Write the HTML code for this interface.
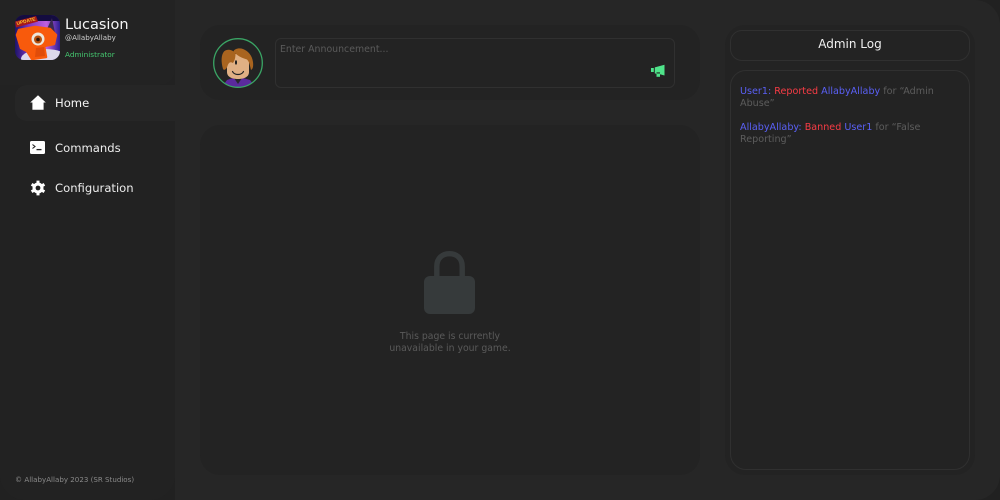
<!DOCTYPE html>
<html><head><meta charset="utf-8">
<style>
html,body{margin:0;padding:0;width:1000px;height:500px;overflow:hidden;background:#212121}
body{position:relative;font-family:"DejaVu Sans","Liberation Sans",sans-serif}
.a{position:absolute;white-space:nowrap}
.p{position:absolute;background:#222;}
</style></head><body>
<!-- sidebar -->
<div class="p" style="left:0;top:0;width:175px;height:500px;background:#222;border-radius:25px"></div>
<!-- main -->
<div class="p" style="left:175px;top:0;width:825px;height:500px;background:#262626;border-radius:25px 25px 25px 0"></div>
<div class="p" style="left:175px;top:0;width:30px;height:500px;background:#262626"></div>
<!-- top profile -->
<div class="p" style="left:0;top:0;width:175px;height:85px;background:#232323;border-radius:0 0 15px 0"></div>
<!-- app icon -->
<svg class="a" style="left:15px;top:15px" width="45" height="45" viewBox="0 0 45 45">
<defs><clipPath id="c"><rect width="45" height="45" rx="9"/></clipPath>
<linearGradient id="g" x1="0" y1="0" x2="1" y2="0"><stop offset="0" stop-color="#1c1468"/><stop offset=".3" stop-color="#7a34c0"/><stop offset=".7" stop-color="#c060e0"/><stop offset="1" stop-color="#2a1c90"/></linearGradient></defs>
<g clip-path="url(#c)">
<rect width="45" height="45" fill="url(#g)"/>
<rect y="0" width="45" height="6" fill="#140c40"/>
<ellipse cx="30" cy="44" rx="24" ry="10" fill="#dcd8ec"/>
<path d="M32 14L37 3 40 18Z" fill="#3a2a50"/>
<path d="M4 15L20 12 35 14 41 20 39 29 29 31 31 42 17 44 12 36 6 33 2 20Z" fill="#f85a0c" stroke="#f85a0c" stroke-width="2.500" stroke-linejoin="round"/>
<path d="M21 33L29 32 30 41 20 42Z" fill="#e04c0a"/>
<circle cx="23" cy="24" r="6.500" fill="#ece6dc"/>
<circle cx="23" cy="24.500" r="4" fill="#b5500f"/>
<circle cx="23" cy="24.500" r="1.800" fill="#301508"/>
<path d="M0 6.500L21 1 23 6.500 1 12.500Z" fill="#a81818"/>
<text x="2" y="10" font-size="4.800" font-weight="bold" fill="#f6c92f" transform="rotate(-14 2 10)" font-family="Liberation Sans">UPDATE</text>
</g>
</svg>
<div class="a" style="left:65px;top:16px;font-size:14.500px;line-height:18px;color:#f4f4f4">Lucasion</div>
<div class="a" style="left:65px;top:33px;font-size:7.100px;line-height:10px;color:#d0d0d0">@AllabyAllaby</div>
<div class="a" style="left:65px;top:50px;font-size:7.300px;line-height:10px;color:#45c870">Administrator</div>
<!-- active nav -->
<div class="p" style="left:15px;top:85px;width:160px;height:36px;background:#262626;border-radius:12px 0 0 12px"></div>
<svg class="a" style="left:30px;top:95px" width="16" height="15" viewBox="0 0 16 15"><path d="M8 .3L15.800 7.500H13.600V14.800H2.400V7.500H.2Z" fill="#fff"/></svg>
<div class="a" style="left:55px;top:95px;font-size:11.600px;line-height:16px;color:#f4f4f4">Home</div>
<svg class="a" style="left:30px;top:141px" width="15" height="13" viewBox="0 0 15 13"><rect width="15" height="13" rx="1.500" fill="#fff"/><path d="M2.500 3.500L5 5.500 2.500 7.500" fill="none" stroke="#222" stroke-width="1.100"/><path d="M6.500 8.600H11.500" stroke="#222" stroke-width="1.300"/></svg>
<div class="a" style="left:55px;top:140px;font-size:11.600px;line-height:16px;color:#ececec">Commands</div>
<svg class="a" style="left:30px;top:180px" width="16" height="16" viewBox="0 0 16 16"><circle cx="8" cy="8" r="3.900" fill="none" stroke="#fff" stroke-width="3.200"/><path d="M8 8V.6M8 8V15.400M8 8L14.400 4.300M8 8L1.600 11.700M8 8L14.400 11.700M8 8L1.600 4.300" stroke="#fff" stroke-width="3"/><circle cx="8" cy="8" r="2.400" fill="#222"/></svg>
<div class="a" style="left:55px;top:180px;font-size:11.600px;line-height:16px;color:#ececec">Configuration</div>
<div class="a" style="left:15px;top:475px;font-size:7.100px;line-height:10px;color:#8a8a8a">© AllabyAllaby 2023 (SR Studios)</div>
<!-- announcement -->
<div class="p" style="left:200px;top:25px;width:500px;height:75px;background:#232323;border-radius:20px"></div>
<svg class="a" style="left:213px;top:38px" width="50" height="50" viewBox="0 0 50 50">
<defs><clipPath id="av"><circle cx="25" cy="25" r="24.300"/></clipPath></defs>
<g clip-path="url(#av)">
<path d="M8 50L14 42 20 40H30L37 42 43 50Z" fill="#5a2a9c"/>
<path d="M21 40L25 46 29 40Z" fill="#26262c"/>
<path d="M14 16H36V34C36 39 31 41 25 41 19 41 14 39 14 34Z" fill="#e0b084"/>
<path d="M10 31C8 24 8 17 11 13.500 14 11 18 11.500 20.500 13.500 21 11 26 9.500 30 11 35 13 39 17 40 24 40.500 28 40 31 38 32 37 28 36.500 24 34 21.500 29 20 25 18 22.500 15.500 22.500 19 22 22 20 25 17 23 15.500 25 14.500 28 13.500 31 11.500 33 10 31Z" fill="#a9641f"/>
<ellipse cx="23" cy="24.500" rx="1" ry="2.200" fill="#1e1e1e"/>
<path d="M19.500 33.500C21.500 37.500 28.500 37.500 30.500 33.500" fill="none" stroke="#222" stroke-width="1.200" stroke-linecap="round"/>
</g>
<circle cx="25" cy="25" r="24.300" fill="none" stroke="#3aa565" stroke-width="1.300"/>
</svg>
<div class="a" style="left:275px;top:38px;width:398px;height:48px;border:1px solid #303030;border-radius:6px"></div>
<div class="a" style="left:280px;top:43px;font-size:9.400px;line-height:14px;color:#5a5a5a">Enter Announcement...</div>
<svg class="a" style="left:651px;top:64px" width="14" height="14" viewBox="0 0 14 14"><path d="M0 4H2.800V8H0Z" fill="#4fe38a"/><path d="M3.800 3.400L13.500 .7V11.500L9 10.300V8.400H5.500V10L3.800 9.300Z" fill="#4fe38a"/><path d="M5.500 9.500H9V12.800H5.500Z" fill="#4fe38a"/></svg>
<!-- big panel -->
<div class="p" style="left:200px;top:125px;width:500px;height:350px;background:#232323;border-radius:20px"></div>
<svg class="a" style="left:424px;top:251px" width="51" height="64" viewBox="0 0 51 64"><path d="M12.800 28V15.500C12.800 7 18.500 2.700 25.500 2.700S38.200 7 38.200 15.500V28" fill="none" stroke="#363a3b" stroke-width="5.400"/><rect x="0" y="25" width="51" height="38" rx="6" fill="#363a3b"/></svg>
<div class="a" style="left:350px;width:200px;top:331px;text-align:center;font-size:9.300px;line-height:11.500px;color:#5a5a5a;white-space:normal">This page is currently<br>unavailable in your game.</div>
<!-- right -->
<div class="p" style="left:725px;top:25px;width:250px;height:450px;background:#232323;border-radius:20px"></div>
<div class="a" style="left:730px;top:30px;width:238px;height:29px;border:1px solid #303030;border-radius:12px"></div>
<div class="a" style="left:730px;width:240px;top:36px;text-align:center;font-size:12px;line-height:16px;color:#f0f0f0">Admin Log</div>
<div class="a" style="left:730px;top:70px;width:238px;height:398px;border:1px solid #303030;border-radius:16px"></div>
<div class="a" style="left:740px;top:86px;width:225px;font-size:9.600px;line-height:12px;white-space:normal;color:#5c5c5c"><span style="color:#5a60f5">User1:</span> <span style="color:#f83c45">Reported</span> <span style="color:#5a60f5">AllabyAllaby</span> for “Admin<br>Abuse”</div>
<div class="a" style="left:740px;top:122px;width:225px;font-size:9.600px;line-height:12px;white-space:normal;color:#5c5c5c"><span style="color:#5a60f5">AllabyAllaby:</span> <span style="color:#f83c45">Banned</span> <span style="color:#5a60f5">User1</span> for “False<br>Reporting”</div>
</body></html>
